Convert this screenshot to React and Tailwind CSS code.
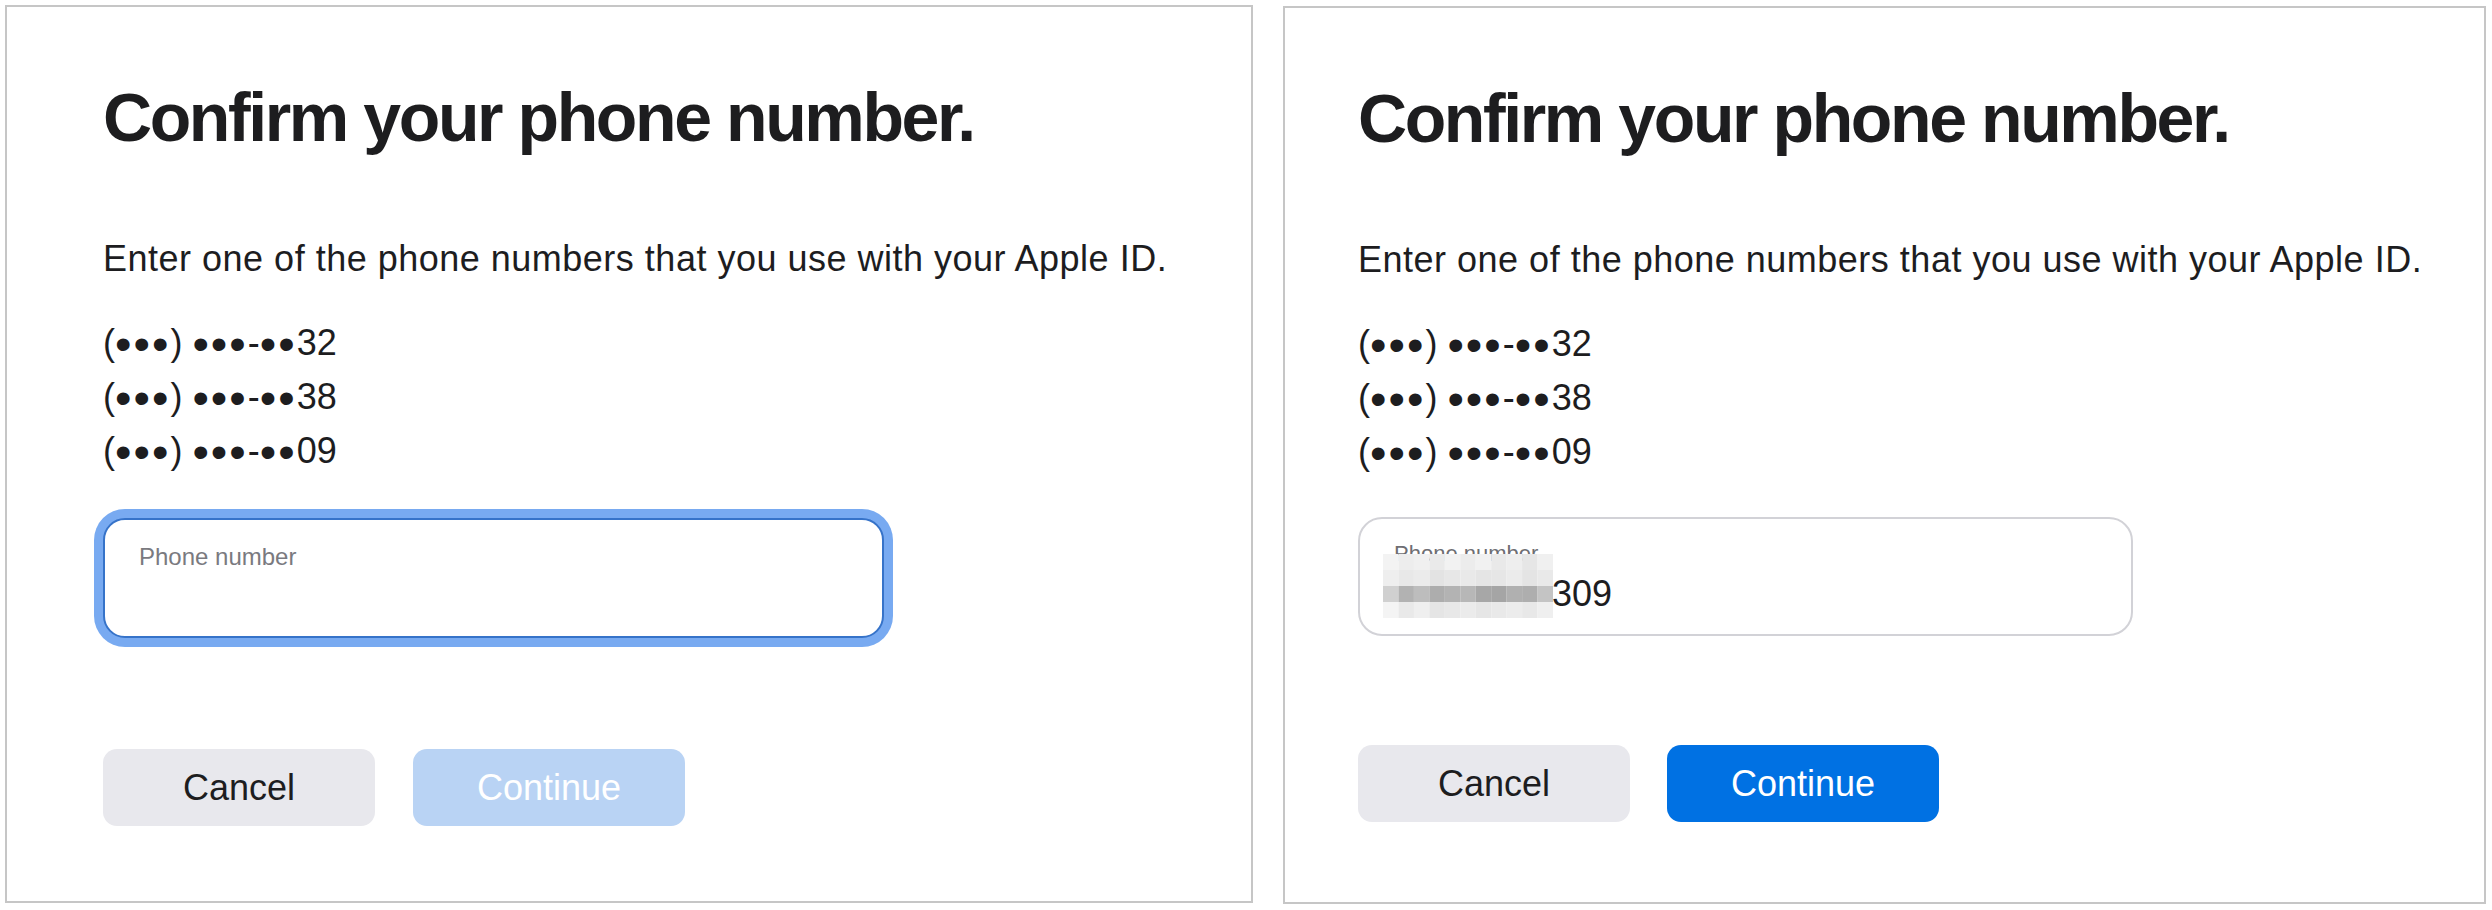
import React from "react";

const phones = ["32", "38", "09"];

function Dots({ n }) {
  return (
    <span className="text-[47px] align-[-5px] tracking-[2px]">{"•".repeat(n)}</span>
  );
}

function PhoneLine({ tail }) {
  return (
    <div className="h-[54px] leading-[54px] text-[36px] whitespace-nowrap">
      (<Dots n={3} />){" "}
      <Dots n={3} />-<Dots n={2} />
      {tail}
    </div>
  );
}

const mosaic = [
  ["#f3f3f3", "#ededed", "#f0f0f0", "#eaeaea", "#f2f2f2", "#ececec", "#f1f1f1", "#e9e9e9", "#eeeeee", "#e6e6e6", "#f0f0f0"],
  ["#eeeeee", "#e8e8e8", "#ebebeb", "#e3e3e3", "#e7e7e7", "#e9e9e9", "#e5e5e5", "#e6e6e6", "#ebebeb", "#e4e4e4", "#e9e9e9"],
  ["#d0d0d0", "#b2b2b2", "#bdbdbd", "#adadad", "#b3b3b3", "#b7b7b7", "#a7a7a7", "#a5a5a5", "#b0b0b0", "#aeaeae", "#c4c4c4"],
  ["#f4f4f4", "#e9e9e9", "#efefef", "#e5e5e5", "#e8e8e8", "#ebebeb", "#e6e6e6", "#e9e9e9", "#ececec", "#e8e8e8", "#efefef"],
];

function Mosaic() {
  return (
    <svg
      className="absolute left-[23px] top-[35px]"
      width="170"
      height="64"
      viewBox="0 0 176 64"
      preserveAspectRatio="none"
    >
      {mosaic.map((row, r) =>
        row.map((c, i) => (
          <rect key={`${r}-${i}`} x={i * 16} y={r * 16} width="16" height="16" fill={c} />
        ))
      )}
    </svg>
  );
}

function Panel({ outer, pad, filled }) {
  return (
    <div className={`border-2 border-[#c6c6c6] bg-white h-[898px] shrink-0 ${outer}`}>
      <div className={`${pad} pt-[76px] text-[#1d1d1f]`}>
        <h1 className="text-[68px] leading-[68px] font-bold tracking-[-2.4px] whitespace-nowrap">
          Confirm your phone number.
        </h1>
        <p className="mt-[90px] text-[36px] leading-[36px] tracking-[0.5px] whitespace-nowrap">
          Enter one of the phone numbers that you use with your Apple ID.
        </p>
        <div className="mt-[39px]">
          {phones.map((p) => (
            <PhoneLine key={p} tail={p} />
          ))}
        </div>

        {filled ? (
          <div className="relative mt-[38px] w-[775px] h-[119px] rounded-[24px] border-2 border-[#d2d2d7] bg-white pl-[34px] pt-[24px]">
            <div className="text-[22px] leading-[22px] text-[#6e6e73]">Phone number</div>
            <div className="mt-[11px] pl-[158px] text-[36px] leading-[36px] text-[#1d1d1f]">309</div>
            <Mosaic />
          </div>
        ) : (
          <div className="mt-[40px] w-[781px] h-[120px] rounded-[22px] border-2 border-[#3673c9] bg-white shadow-[0_0_0_9px_#78aaf1] pl-[34px] pt-[25px]">
            <div className="text-[24px] leading-[24px] text-[#7a7a7f]">Phone number</div>
          </div>
        )}

        <div className={`flex ${filled ? "mt-[109px] gap-[37px]" : "mt-[111px] gap-[38px]"}`}>
          <button className="w-[272px] h-[77px] rounded-[14px] bg-[#e8e8ed] text-[36px] text-[#1d1d1f] flex items-center justify-center">
            Cancel
          </button>
          <button
            className={`w-[272px] h-[77px] rounded-[14px] text-[36px] text-white flex items-center justify-center ${
              filled ? "bg-[#0071e3]" : "bg-[#b9d3f4]"
            }`}
          >
            Continue
          </button>
        </div>
      </div>
    </div>
  );
}

export default function App() {
  return (
    <div className="flex gap-[30px] p-[5px] w-[2492px] h-[910px] bg-white overflow-hidden font-['Liberation_Sans',Arial,sans-serif]">
      <Panel outer="w-[1248px]" pad="pl-[96px]" filled={false} />
      <Panel outer="w-[1203px] mt-[1px]" pad="pl-[73px]" filled={true} />
    </div>
  );
}
